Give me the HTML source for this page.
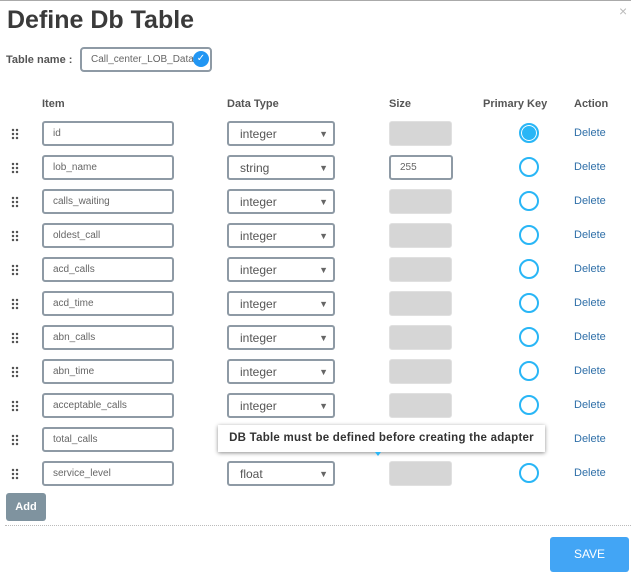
<!DOCTYPE html><html><head><style>
body{margin:0;width:631px;height:584px;background:#fff;font-family:"Liberation Sans",sans-serif;position:relative;overflow:hidden;color:#333}
.a{position:absolute}
.inp{position:absolute;border:2px solid #8e9aa5;border-radius:3px;box-sizing:border-box;height:25px;font-size:10px;color:#666;padding-left:9px;line-height:22px}
.sel{font-size:12px;padding-left:11px;color:#555}
.sel:after{content:"▼";position:absolute;right:5px;top:0;font-size:9px;color:#666}
.sz{position:absolute;left:389px;width:63px;height:25px;background:#d6d6d6;border-radius:3px;border:1px solid #e0e0e0;box-sizing:border-box}
.rad{position:absolute;left:519px;width:20px;height:20px;border:2px solid #29b6f6;border-radius:50%;box-sizing:border-box}
.del{position:absolute;left:574px;font-size:11px;color:#2f6fa8}
.h{position:absolute;top:98px;font-size:11px;font-weight:bold;color:#555}
.dr{position:absolute;left:11px;width:8px;height:12px;background:radial-gradient(circle,#555 1.1px,transparent 1.4px) 0 0/4px 4px}
</style></head><body>
<div class="a" style="left:0;top:0;width:631px;height:1px;background:#aaa"></div>
<div class="a" style="left:7px;top:6px;font-size:25px;font-weight:bold;color:#3a3a3a">Define Db Table</div>
<div class="a" style="left:619px;top:3px;font-size:14px;color:#bbb">×</div>
<div class="a" style="left:6px;top:54px;font-size:11px;font-weight:bold;color:#555">Table name :</div>
<div class="inp" style="left:80px;top:47px;width:132px;height:25px;border-radius:4px">Call_center_LOB_Data</div>
<div class="a" style="left:193px;top:51px;width:16px;height:16px;border-radius:50%;background:#2196f3;color:#fff;font-size:10px;text-align:center;line-height:16px">✓</div>
<div class="h" style="left:42px">Item</div><div class="h" style="left:227px">Data Type</div><div class="h" style="left:389px">Size</div><div class="h" style="left:483px">Primary Key</div><div class="h" style="left:574px">Action</div>
<div id="rows"></div>
<script>
var r=[["id","integer"],["lob_name","string"],["calls_waiting","integer"],["oldest_call","integer"],["acd_calls","integer"],["acd_time","integer"],["abn_calls","integer"],["abn_time","integer"],["acceptable_calls","integer"],["total_calls",""],["service_level","float"]];
var h="";r.forEach(function(x,i){var t=121+34*i;
h+='<div class="dr" style="top:'+(t+7)+'px"></div><div class="inp" style="left:42px;top:'+t+'px;width:132px">'+x[0]+'</div>';
if(x[1])h+='<div class="inp sel" style="left:227px;top:'+t+'px;width:108px">'+x[1]+'</div>';
if(i==1)h+='<div class="inp" style="left:389px;top:'+t+'px;width:64px">255</div>';else if(x[1])h+='<div class="sz" style="top:'+t+'px"></div>';
h+='<div class="rad" style="top:'+(t+2)+'px;'+(i==0?'background:#29b6f6;box-shadow:inset 0 0 0 1px #fff':'')+'"></div>';
h+='<div class="del" style="top:'+(t+6)+'px">Delete</div>';});
document.getElementById("rows").innerHTML=h;
</script>
<div class="a" style="left:218px;top:425px;width:327px;height:27px;background:#fff;box-shadow:0 1px 4px rgba(0,0,0,.45);font-size:11.5px;font-weight:bold;color:#333;line-height:27px;text-align:center;letter-spacing:.25px">DB Table must be defined before creating the adapter</div>
<div class="a" style="left:375px;top:452px;border:3px solid transparent;border-top:4px solid #29b6f6"></div>
<div class="a" style="left:6px;top:493px;width:40px;height:28px;background:#7f939f;border-radius:3px;color:#fff;font-size:11px;font-weight:bold;text-align:center;line-height:28px">Add</div>
<div class="a" style="left:5px;top:525px;width:626px;border-top:1px dotted #bbb"></div>
<div class="a" style="left:550px;top:537px;width:79px;height:35px;background:#42a5f5;border-radius:3px;color:#fff;font-size:12px;text-align:center;line-height:35px">SAVE</div>
</body></html>
